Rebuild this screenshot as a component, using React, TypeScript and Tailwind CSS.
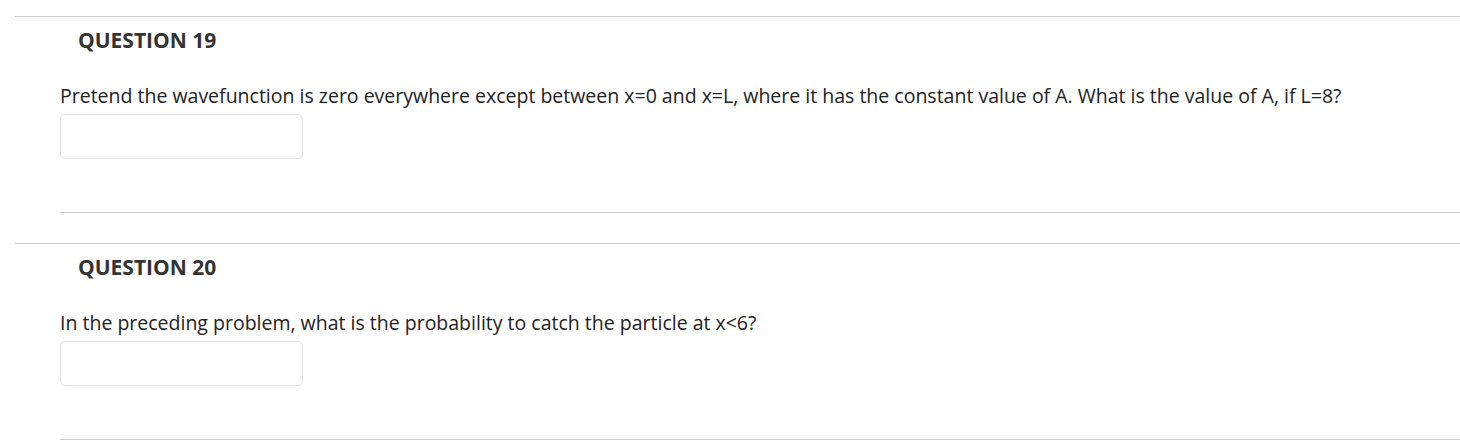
function Question({ title, text }: { title: string; text: string }) {
  return (
    <section className="ml-[15px] border-t border-[#cdcdcd]">
      <h2 className="ml-[63px] mt-[11px] text-[21px] font-bold leading-[24px] text-[#333333]">{title}</h2>
      <div className="ml-[45px] mt-[32px]">
        <p className="text-[19.5px] leading-[24px] text-[#222222]">{text}</p>
        <input
          type="text"
          className="mt-[6px] block h-[45px] w-[243px] rounded-[5px] border border-[#e3e3e3] bg-white outline-none"
        />
        <div className="mt-[53px] border-b border-[#cdcdcd]" />
      </div>
    </section>
  );
}

export default function App() {
  return (
    <div className="min-h-screen bg-white pt-[16px] font-['Open_Sans',sans-serif]">
      <Question
        title="QUESTION 19"
        text="Pretend the wavefunction is zero everywhere except between x=0 and x=L, where it has the constant value of A. What is the value of A, if L=8?"
      />
      <div className="h-[30px]" />
      <Question
        title="QUESTION 20"
        text="In the preceding problem, what is the probability to catch the particle at x<6?"
      />
    </div>
  );
}
